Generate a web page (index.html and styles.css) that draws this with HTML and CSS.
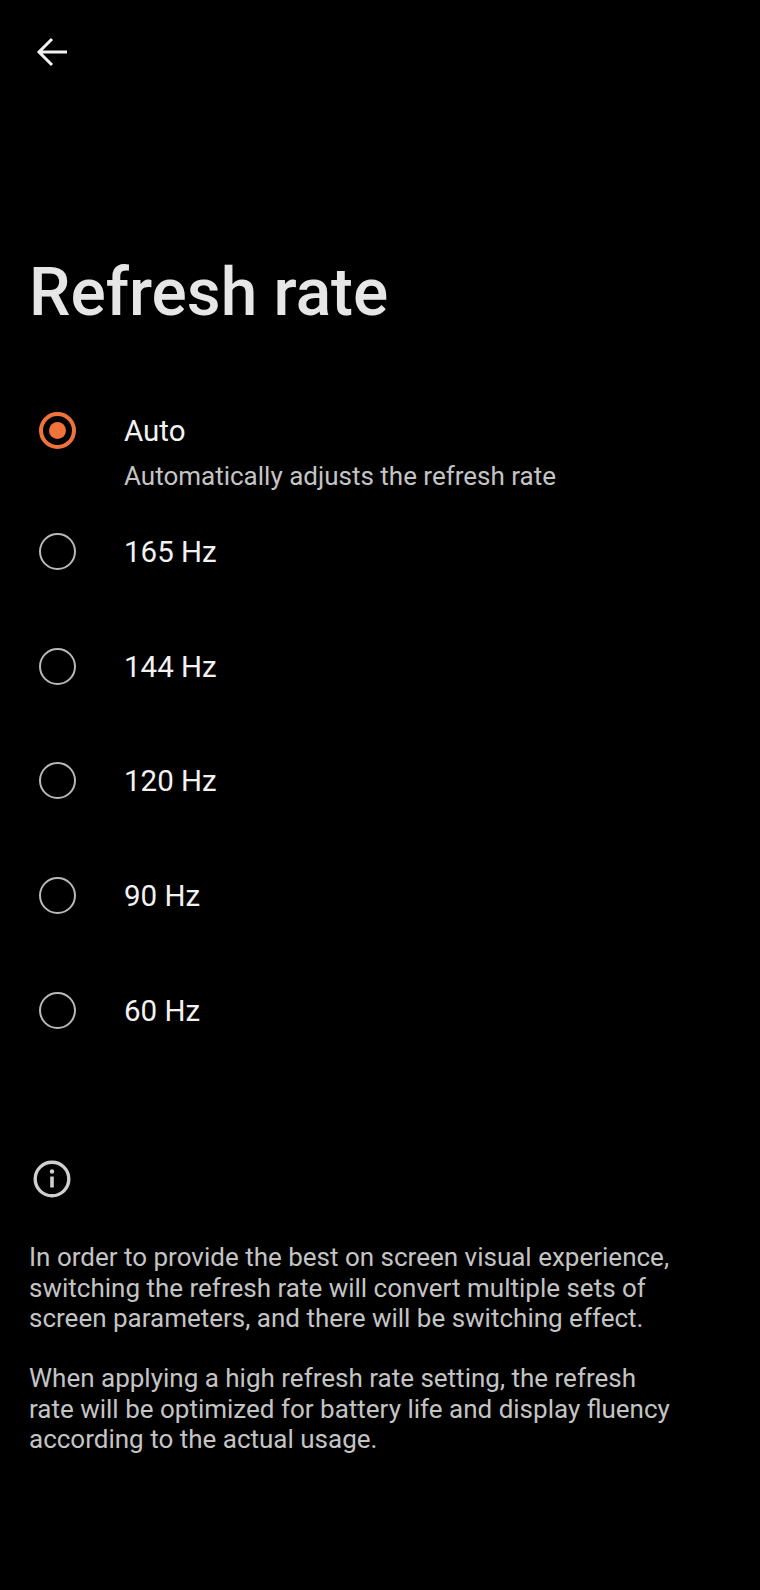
FILE: index.html
```html
<!DOCTYPE html>
<html lang="en">
<head>
    <meta charset="UTF-8">
    <meta name="viewport" content="width=device-width, initial-scale=1.0">
    <title>Refresh rate</title>
    <link rel="stylesheet" href="styles.css">
</head>
<body>
    <div class="page">
        <div class="topbar">
            <svg class="back" width="32" height="30" viewBox="0 0 32 30" fill="none" stroke="#f2f2f2" stroke-width="3">
                <path d="M31 15H3M16 2L3 15l13 13"/>
            </svg>
        </div>

        <h1 class="title">Refresh rate</h1>

        <div class="options">
            <div class="option option-first">
                <span class="radio radio-on"></span>
                <div class="option-text">
                    <div class="label">Auto</div>
                    <div class="sub">Automatically adjusts the refresh rate</div>
                </div>
            </div>
            <div class="option"><span class="radio"></span><div class="label">165 Hz</div></div>
            <div class="option"><span class="radio"></span><div class="label">144 Hz</div></div>
            <div class="option"><span class="radio"></span><div class="label">120 Hz</div></div>
            <div class="option"><span class="radio"></span><div class="label">90 Hz</div></div>
            <div class="option"><span class="radio"></span><div class="label">60 Hz</div></div>
        </div>

        <svg class="info" width="38" height="38" viewBox="0 0 38 38" fill="none">
            <circle cx="19" cy="19" r="16.8" stroke="#cfcfcf" stroke-width="3.4"/>
            <circle cx="19" cy="11.5" r="2.2" fill="#cfcfcf"/>
            <path d="M19 16.5v11" stroke="#cfcfcf" stroke-width="3.6"/>
        </svg>

        <p class="note">In order to provide the best on screen visual experience,<br>switching the refresh rate will convert multiple sets of<br>screen parameters, and there will be switching effect.</p>
        <p class="note">When applying a high refresh rate setting, the refresh<br>rate will be optimized for battery life and display fluency<br>according to the actual usage.</p>
    </div>
</body>
</html>
```

FILE: styles.css
```css
html, body {
    margin: 0;
    background: #000;
}

.page {
    height: 1590px;
    overflow: hidden;
    font-family: Roboto, "Liberation Sans", sans-serif;
    color: #f2f2f2;
}

.topbar {
    padding: 37px 0 0 36px;
    height: 230px;
    box-sizing: border-box;
}

.back {
    display: block;
}

.title {
    margin: 0 0 0 29px;
    height: 182px;
    font-size: 65.8px;
    line-height: 126px;
    font-weight: 500;
    color: #e6e6e6;
}

.options {
    margin: 0;
}

.option {
    display: flex;
    align-items: center;
    height: 114.7px;
    padding-left: 39px;
}

.option-first {
    height: 82px;
    align-items: flex-start;
}

.radio {
    flex: none;
    width: 37px;
    height: 37px;
    box-sizing: border-box;
    border: 2px solid #b8b8b8;
    border-radius: 50%;
    margin-right: 48px;
}

.radio-on {
    border: 4px solid #f0733c;
    position: relative;
}

.radio-on::after {
    content: "";
    position: absolute;
    top: 6px;
    left: 6px;
    width: 17px;
    height: 17px;
    border-radius: 50%;
    background: #f0733c;
}

.label {
    padding-top: 2px;
    font-size: 29.5px;
    line-height: 37px;
}

.option-text .label {
    padding-top: 1px;
}

.sub {
    margin-top: 10px;
    font-size: 26px;
    line-height: 33px;
    color: #c4c4c4;
    white-space: nowrap;
}

.info {
    display: block;
    margin: 93px 0 0 33px;
}

.note {
    margin: 44px 0 0 29px;
    font-size: 26px;
    line-height: 30.4px;
    color: #c4c4c4;
}

.note + .note {
    margin-top: 29.6px;
}
```
